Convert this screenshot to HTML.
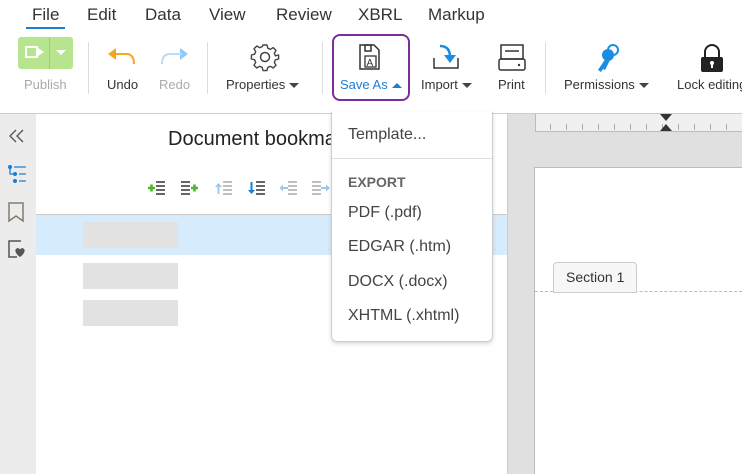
<!DOCTYPE html>
<html><head><meta charset="utf-8"><style>
*{box-sizing:border-box;margin:0;padding:0}
body{width:742px;height:474px;overflow:hidden;background:#fff;font-family:"Liberation Sans",sans-serif;position:relative;color:#333}
.a{position:absolute}
.menu span{position:absolute;top:5px;font-size:17px;color:#333}
.lbl{position:absolute;top:77px;font-size:13px;color:#333;white-space:nowrap}
.sep{position:absolute;top:42px;width:1px;height:52px;background:#ddd}
.car{display:inline-block;width:0;height:0;border-left:5px solid transparent;border-right:5px solid transparent;border-top:5px solid #444;vertical-align:middle;margin-left:4px}
.ph{position:absolute;left:83px;width:95px;height:26px;background:#e2e2e2}
.dd div{position:absolute;left:16px;font-size:16px;color:#444}
.li{position:absolute;top:180px}
</style></head><body>
<div class="menu">
<span style="left:32px">File</span><span style="left:87px">Edit</span><span style="left:145px">Data</span><span style="left:209px">View</span><span style="left:276px">Review</span><span style="left:358px">XBRL</span><span style="left:428px">Markup</span>
</div>
<div class="a" style="left:26px;top:27px;width:39px;height:2px;background:#1a7fd4"></div>
<div class="a" style="left:18px;top:37px;width:55px;height:32px;background:#b7e48e;border-radius:3px"></div>
<div class="a" style="left:49px;top:37px;width:1px;height:32px;background:#9ccf70"></div>
<div class="a" style="left:25px;top:46px;width:13px;height:12px;border:2px solid #fff;border-radius:1px"></div>
<div class="a" style="left:38px;top:48px;width:0;height:0;border-top:4px solid transparent;border-bottom:4px solid transparent;border-left:6px solid #fff"></div>
<div class="a" style="left:56px;top:50px;width:0;height:0;border-left:5px solid transparent;border-right:5px solid transparent;border-top:5px solid #fff"></div>
<div class="lbl" style="left:24px;color:#aaa">Publish</div>
<div class="sep" style="left:88px"></div>
<svg class="a" style="left:106px;top:44px" width="32" height="24"><path d="M10 4 L2 10 L10 16 Z" fill="#f5a623"/><path d="M8 10 H20 Q28 10 28 20" stroke="#f5a623" stroke-width="2" fill="none"/></svg>
<div class="lbl" style="left:107px">Undo</div>
<svg class="a" style="left:158px;top:44px" width="32" height="24"><path d="M22 4 L30 10 L22 16 Z" fill="#90caf9"/><path d="M24 10 H12 Q4 10 4 20" stroke="#bbdcfa" stroke-width="2" fill="none"/></svg>
<div class="lbl" style="left:159px;color:#aaa">Redo</div>
<div class="sep" style="left:207px"></div>
<svg class="a" style="left:249px;top:42px" width="32" height="30" viewBox="0 0 32 30"><circle cx="16" cy="15" r="4.5" stroke="#444" stroke-width="1.5" fill="none"/><path d="M14 3h4l.8 3.2 2.6 1.1 2.8-1.7 2.8 2.8-1.7 2.8 1.1 2.6L29.6 13v4l-3.2.8-1.1 2.6 1.7 2.8-2.8 2.8-2.8-1.7-2.6 1.1L18 28.6h-4l-.8-3.2-2.6-1.1-2.8 1.7-2.8-2.8 1.7-2.8-1.1-2.6L2.4 17v-4l3.2-.8 1.1-2.6-1.7-2.8 2.8-2.8 2.8 1.7 2.6-1.1z" stroke="#444" stroke-width="1.4" fill="none" stroke-linejoin="round"/></svg>
<div class="lbl" style="left:226px">Properties<span class="car"></span></div>
<div class="sep" style="left:322px"></div>
<div class="a" style="left:332px;top:34px;width:78px;height:67px;border:2.5px solid #7b2d9c;border-radius:8px;background:#fff"></div>
<svg class="a" style="left:356px;top:42px" width="28" height="30"><path d="M4 3h14l5 5v19H4z" stroke="#333" stroke-width="1.5" fill="none"/><rect x="9" y="3" width="6" height="6" stroke="#333" stroke-width="1.5" fill="none"/><rect x="9" y="14" width="11" height="11" stroke="#333" stroke-width="1.3" fill="none"/><text x="10.5" y="24" font-size="10" font-family="Liberation Sans" fill="#333">A</text></svg>
<div class="lbl" style="left:340px;color:#1a7fd4">Save As<span class="car" style="border-top:0;border-bottom:5px solid #1a7fd4"></span></div>
<svg class="a" style="left:432px;top:44px" width="30" height="28"><path d="M2 14v10h24V14" stroke="#333" stroke-width="1.5" fill="none"/><path d="M8 2 Q18 2 18 13" stroke="#1a8de0" stroke-width="2.5" fill="none"/><path d="M12 11h12l-6 8z" fill="#1a8de0"/></svg>
<div class="lbl" style="left:421px">Import<span class="car"></span></div>
<svg class="a" style="left:497px;top:43px" width="30" height="30"><rect x="4" y="2" width="22" height="14" stroke="#333" stroke-width="1.5" fill="none"/><line x1="8" y1="8" x2="22" y2="8" stroke="#333" stroke-width="1.5"/><rect x="2" y="16" width="26" height="11" rx="2" stroke="#333" stroke-width="1.5" fill="none"/><circle cx="22" cy="22" r="1.2" fill="#333"/></svg>
<div class="lbl" style="left:498px">Print</div>
<div class="sep" style="left:545px"></div>
<svg class="a" style="left:594px;top:42px" width="28" height="32"><circle cx="19" cy="8" r="5" stroke="#1a8de0" stroke-width="2" fill="none"/><circle cx="14" cy="13" r="6" fill="#1a8de0"/><path d="M12 16 L4 28 L7 30 L9 27 L11 28 L13 24 L16 18z" fill="#1a8de0"/></svg>
<div class="lbl" style="left:564px">Permissions<span class="car"></span></div>
<svg class="a" style="left:698px;top:42px" width="28" height="32"><path d="M7 15V10a7 7 0 0 1 14 0v5" stroke="#222" stroke-width="2" fill="none"/><rect x="3" y="15" width="22" height="15" rx="2" fill="#222"/><circle cx="14" cy="21" r="2" fill="#fff"/><rect x="13" y="21" width="2" height="5" fill="#fff"/></svg>
<div class="lbl" style="left:677px">Lock editing</div>
<div class="a" style="left:0;top:113px;width:742px;height:1px;background:#ccc"></div>
<div class="a" style="left:0;top:114px;width:36px;height:360px;background:#ececec"></div>
<svg class="a" style="left:8px;top:128px" width="18" height="16"><path d="M8 2 2 8l6 6M15 2 9 8l6 6" stroke="#555" stroke-width="1.4" fill="none"/></svg>
<svg class="a" style="left:6px;top:163px" width="22" height="22"><circle cx="4" cy="4" r="2" fill="#1a7fd4"/><circle cx="9" cy="11" r="2" fill="#1a7fd4"/><circle cx="9" cy="18" r="2" fill="#1a7fd4"/><path d="M4 4v7h5M8 4h12M13 11h7M13 18h7" stroke="#1a7fd4" stroke-width="1.3" fill="none"/></svg>
<svg class="a" style="left:7px;top:201px" width="20" height="22"><path d="M2 2h14v18l-7-5-7 5z" stroke="#8a7a6a" stroke-width="1.5" fill="none"/></svg>
<svg class="a" style="left:6px;top:239px" width="22" height="22"><path d="M15 2H3v16h8" stroke="#555" stroke-width="1.5" fill="none"/><path d="M18 10c-2-2-4 0-4 1 0-1-2-3-4-1s1 6 4 8c3-2 6-6 4-8z" fill="#555"/></svg>
<div class="a" style="left:36px;top:114px;width:471px;height:360px;background:#fff"></div>
<div class="a" style="left:168px;top:128px;font-size:20px;color:#222">Document bookmarks</div>
<svg class="li" style="left:147px" width="20" height="18"><path d="M9 2h9M9 6h9M9 10h9M9 14h9" stroke="#333" stroke-width="1.6"/><path d="M1 8h7M4.5 4.5v7" stroke="#4cb82a" stroke-width="2.6"/></svg>
<svg class="li" style="left:180px" width="20" height="18"><path d="M1 2h9M1 6h9M1 10h9M1 14h9" stroke="#333" stroke-width="1.6"/><path d="M11 8h7M14.5 4.5v7" stroke="#4cb82a" stroke-width="2.6"/></svg>
<svg class="li" style="left:214px" width="20" height="18"><path d="M9 2h9M9 6h9M9 10h9M9 14h9" stroke="#aaa" stroke-width="1.6"/><path d="M4.5 4v10" stroke="#9cc8ef" stroke-width="2"/><path d="M1 7l3.5-4 3.5 4z" fill="#9cc8ef"/></svg>
<svg class="li" style="left:247px" width="20" height="18"><path d="M9 2h9M9 6h9M9 10h9M9 14h9" stroke="#333" stroke-width="1.6"/><path d="M4.5 2v10" stroke="#1a7fd4" stroke-width="2"/><path d="M1 10l3.5 4 3.5-4z" fill="#1a7fd4"/></svg>
<svg class="li" style="left:279px" width="20" height="18"><path d="M9 2h9M9 6h9M9 10h9M9 14h9" stroke="#aaa" stroke-width="1.6"/><path d="M3 8h6" stroke="#9cc8ef" stroke-width="2"/><path d="M4 4.5 0.5 8 4 11.5z" fill="#9cc8ef"/></svg>
<svg class="li" style="left:311px" width="20" height="18"><path d="M1 2h9M1 6h9M1 10h9M1 14h9" stroke="#aaa" stroke-width="1.6"/><path d="M10 8h6" stroke="#9cc8ef" stroke-width="2"/><path d="M15 4.5 19 8 15 11.5z" fill="#9cc8ef"/></svg>
<div class="a" style="left:36px;top:214px;width:471px;height:1px;background:#ccc"></div>
<div class="a" style="left:36px;top:215px;width:471px;height:40px;background:#d6ebfc"></div>
<div class="ph" style="top:222px"></div><div class="ph" style="top:263px"></div><div class="ph" style="top:300px"></div>
<div class="a" style="left:507px;top:114px;width:235px;height:360px;background:#e0e0e0;border-left:1px solid #ccc"></div>
<div class="a" style="left:535px;top:114px;width:207px;height:18px;background:#f0f0f0;border-left:1px solid #bbb;border-bottom:1px solid #bbb"></div>
<div class="a" style="left:550px;top:124px;width:192px;height:6px;background:repeating-linear-gradient(90deg,#aaa 0 1px,transparent 1px 16px)"></div>
<div class="a" style="left:660px;top:114px;width:0;height:0;border-left:6px solid transparent;border-right:6px solid transparent;border-top:7px solid #333"></div>
<div class="a" style="left:660px;top:124px;width:0;height:0;border-left:6px solid transparent;border-right:6px solid transparent;border-bottom:7px solid #333"></div>
<div class="a" style="left:534px;top:167px;width:208px;height:307px;background:#fff;border-left:1px solid #bbb;border-top:1px solid #bbb"></div>
<div class="a" style="left:535px;top:291px;width:207px;border-top:1px dashed #bbb"></div>
<div class="a" style="left:553px;top:262px;width:84px;height:31px;background:#f7f7f7;border:1px solid #ccc;border-radius:4px 4px 0 0;font-size:14px;color:#333;padding:6px 0 0 12px">Section 1</div>
<div class="a dd" style="left:331px;top:112px;width:162px;height:230px;background:#fff;border:1px solid #ccc;border-top:none;border-radius:0 0 6px 6px;box-shadow:0 2px 4px rgba(0,0,0,.15)">
<div style="top:14px">Template...</div>
<div style="left:0;top:46px;width:160px;height:1px;background:#ddd"></div>
<div style="top:62px;font-size:14px;font-weight:bold;color:#666">EXPORT</div>
<div style="top:92px">PDF (.pdf)</div>
<div style="top:126px">EDGAR (.htm)</div>
<div style="top:161px">DOCX (.docx)</div>
<div style="top:195px">XHTML (.xhtml)</div>
</div>
</body></html>
